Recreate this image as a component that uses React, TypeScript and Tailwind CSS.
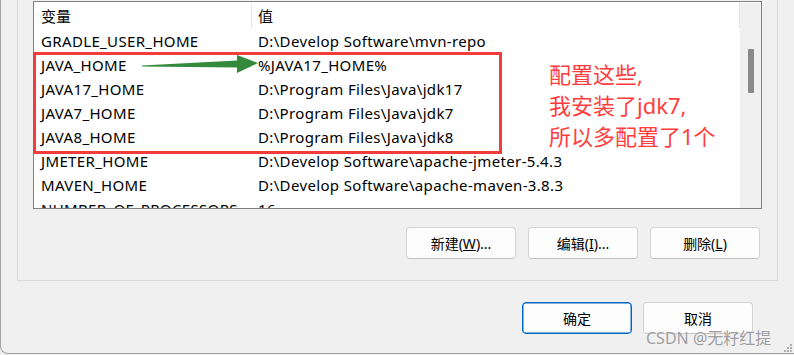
import type { ReactNode } from 'react'

const font = '[font-family:"Noto_Sans","Noto_Sans_CJK_SC",sans-serif]'

const rows = [
  ['GRADLE_USER_HOME', 'D:\\Develop Software\\mvn-repo'],
  ['JAVA_HOME', '%JAVA17_HOME%'],
  ['JAVA17_HOME', 'D:\\Program Files\\Java\\jdk17'],
  ['JAVA7_HOME', 'D:\\Program Files\\Java\\jdk7'],
  ['JAVA8_HOME', 'D:\\Program Files\\Java\\jdk8'],
  ['JMETER_HOME', 'D:\\Develop Software\\apache-jmeter-5.4.3'],
  ['MAVEN_HOME', 'D:\\Develop Software\\apache-maven-3.8.3'],
  ['NUMBER_OF_PROCESSORS', '16'],
]

function Button({ children, primary }: { children: ReactNode; primary?: boolean }) {
  return (
    <button
      className={
        'w-[110px] h-[32px] rounded-[4px] bg-[#fdfdfd] text-[14px] text-black flex items-center justify-center ' +
        (primary
          ? 'border border-[#0067c0] shadow-[inset_0_0_0_0.5px_#0067c0]'
          : 'border border-[#d3d3d3] border-b-[#c2c2c2]')
      }
    >
      {children}
    </button>
  )
}

export default function App() {
  return (
    <div className={`relative w-[794px] h-[355px] overflow-hidden bg-[#f0f0f0] ${font}`}>
      <div className="h-[354px] border-l border-b border-[#a3a3a3] rounded-bl-[8px] flex flex-col">
        {/* group box */}
        <div className="ml-[16px] w-[761px] h-[281px] border-x border-b border-[#dadada] pl-[15px] pt-[1px] flex flex-col">
          <div className="w-[729px] h-[208px] border border-[#828282] bg-white flex overflow-hidden">
            <div className="w-[706px] flex flex-col">
              <div className="h-[27px] flex items-center text-[15px] text-black shrink-0">
                <div className="w-[217px] pl-[7px] leading-none pt-[2px]">变量</div>
                <div className="w-px h-[25px] bg-[#e5e5e5]" />
                <div className="flex-1 pl-[6px] leading-none pt-[2px]">值</div>
                <div className="w-px h-[25px] bg-[#e5e5e5]" />
              </div>
              {rows.map(([name, value]) => (
                <div
                  key={name}
                  className="h-[24px] shrink-0 flex items-center text-[15px] tracking-[0.35px] text-black"
                >
                  <div className="w-[217px] pl-[7px] whitespace-nowrap">{name}</div>
                  <div className="flex-1 pl-[7px] whitespace-nowrap">{value}</div>
                </div>
              ))}
            </div>
            <div className="w-[21px] bg-[#f0f0f0] mt-[1px] flex justify-center">
              <div className="w-[6px] h-[44px] mt-[46px] bg-[#8a8a8a] rounded-[1px]" />
            </div>
          </div>
          <div className="mt-[18px] flex justify-end gap-[12px] pr-[17px]">
            <Button>
              新建(<span className="underline">W</span>)...
            </Button>
            <Button>
              编辑(<span className="underline">I</span>)...
            </Button>
            <Button>
              删除(<span className="underline">L</span>)
            </Button>
          </div>
        </div>
        <div className="mt-[21px] flex justify-end gap-[11px] pr-[41px]">
          <Button primary>确定</Button>
          <Button>取消</Button>
        </div>
      </div>

      {/* annotations */}
      <div className="absolute left-[33px] top-[52px] w-[469px] h-[102px] border-[3px] border-[#f23b3b]" />
      <svg className="absolute left-0 top-0" width="300" height="100">
        <polygon
          points="142,65.5 237,60.5 237,55 258,63 237,73 237,67.5 142,66.5"
          fill="#348a3c"
        />
      </svg>
      <div className="absolute left-[549px] top-[59px] text-[22px] leading-[31px] text-[#ff3d3d] whitespace-nowrap">
        <div>配置这些,</div>
        <div>我安装了jdk7,</div>
        <div>所以多配置了1个</div>
      </div>
      <div className="absolute left-[646px] top-[326px] text-[16px] text-[#9c9c9c] whitespace-nowrap [text-shadow:0_0_2px_#ffffff]">
        CSDN @无籽红提
      </div>
      <div className="absolute right-[2px] bottom-[3px] grid grid-cols-3 gap-[1px]">
        <div className="w-[2px] h-[2px]" />
        <div className="w-[2px] h-[2px]" />
        <div className="w-[2px] h-[2px] bg-[#b0b0b0]" />
        <div className="w-[2px] h-[2px]" />
        <div className="w-[2px] h-[2px] bg-[#b0b0b0]" />
        <div className="w-[2px] h-[2px] bg-[#b0b0b0]" />
        <div className="w-[2px] h-[2px] bg-[#b0b0b0]" />
        <div className="w-[2px] h-[2px] bg-[#b0b0b0]" />
        <div className="w-[2px] h-[2px] bg-[#b0b0b0]" />
      </div>
    </div>
  )
}
